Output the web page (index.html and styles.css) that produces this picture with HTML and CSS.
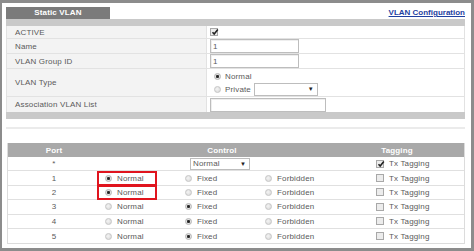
FILE: index.html
```html
<!DOCTYPE html>
<html>
<head>
<meta charset="utf-8">
<link rel="stylesheet" href="styles.css">
</head>
<body>
<div class="frame">
  <div class="top">
    <div class="tab">Static VLAN</div>
    <a class="link" href="#">VLAN Configuration</a>
  </div>
  <div class="band"></div>
  <div class="form">
    <div class="frow h13"><div class="lab">ACTIVE</div><div class="val"><span class="cb on"><svg viewBox="0 0 8 8"><path d="M1.5 4.2 L3.2 6 L6.8 1.6" fill="none" stroke="#222" stroke-width="1.6"/></svg></span></div></div>
    <div class="frow"><div class="lab">Name</div><div class="val"><span class="inp w89">1</span></div></div>
    <div class="frow"><div class="lab">VLAN Group ID</div><div class="val"><span class="inp w89">1</span></div></div>
    <div class="frow h28"><div class="lab">VLAN Type</div>
      <div class="val col">
        <div class="opt"><span class="radio on"></span><span>Normal</span></div>
        <div class="opt"><span class="radio"></span><span>Private</span><span class="sel w64"><span></span><span class="arr">▼</span></span></div>
      </div>
    </div>
    <div class="frow last"><div class="lab">Association VLAN List</div><div class="val"><span class="inp w116"></span></div></div>
  </div>
  <div class="band"></div>
  <div class="sep"></div>
  <div class="ports">
    <div class="phead"><div>Port</div><div class="hctl">Control</div><div class="htag">Tagging</div></div>
    <div class="prow"><div class="pn">*</div><div></div><div><span class="sel w60"><span>Normal</span><span class="arr">▼</span></span></div><div></div><div class="tg"><span class="cb on"><svg viewBox="0 0 8 8"><path d="M1.5 4.2 L3.2 6 L6.8 1.6" fill="none" stroke="#222" stroke-width="1.6"/></svg></span><span>Tx Tagging</span></div></div>
    <div class="prow"><div class="pn">1</div><div class="c1"><span class="opt hl"><span class="radio on"></span><span>Normal</span></span></div><div class="c2"><span class="opt"><span class="radio"></span><span>Fixed</span></span></div><div class="c3"><span class="opt"><span class="radio"></span><span>Forbidden</span></span></div><div class="tg"><span class="cb"></span><span>Tx Tagging</span></div></div>
    <div class="prow"><div class="pn">2</div><div class="c1"><span class="opt hl"><span class="radio on"></span><span>Normal</span></span></div><div class="c2"><span class="opt"><span class="radio"></span><span>Fixed</span></span></div><div class="c3"><span class="opt"><span class="radio"></span><span>Forbidden</span></span></div><div class="tg"><span class="cb"></span><span>Tx Tagging</span></div></div>
    <div class="prow"><div class="pn">3</div><div class="c1"><span class="opt"><span class="radio"></span><span>Normal</span></span></div><div class="c2"><span class="opt"><span class="radio on"></span><span>Fixed</span></span></div><div class="c3"><span class="opt"><span class="radio"></span><span>Forbidden</span></span></div><div class="tg"><span class="cb"></span><span>Tx Tagging</span></div></div>
    <div class="prow"><div class="pn">4</div><div class="c1"><span class="opt"><span class="radio"></span><span>Normal</span></span></div><div class="c2"><span class="opt"><span class="radio on"></span><span>Fixed</span></span></div><div class="c3"><span class="opt"><span class="radio"></span><span>Forbidden</span></span></div><div class="tg"><span class="cb"></span><span>Tx Tagging</span></div></div>
    <div class="prow"><div class="pn">5</div><div class="c1"><span class="opt"><span class="radio"></span><span>Normal</span></span></div><div class="c2"><span class="opt"><span class="radio on"></span><span>Fixed</span></span></div><div class="c3"><span class="opt"><span class="radio"></span><span>Forbidden</span></span></div><div class="tg"><span class="cb"></span><span>Tx Tagging</span></div></div>
  </div>
</div>
</body>
</html>
```
FILE: styles.css
```css
* { box-sizing: border-box; }
html, body { margin: 0; padding: 0; }
body {
  width: 474px; height: 251px;
  font-family: "Liberation Sans", Arial, sans-serif;
  font-size: 8px;
  letter-spacing: 0.15px;
  color: #5a5a5a;
}
.frame {
  width: 474px; height: 251px;
  border-style: solid;
  border-color: #8c8c8c;
  border-width: 3px 3px 3px 2px;
  background: #fff;
  padding: 4px 6px 0 4px;
}
.top {
  display: flex; justify-content: space-between; align-items: flex-end;
  height: 12px;
}
.tab {
  width: 104px; height: 12px;
  background: #7b7b7b; color: #fff;
  font-weight: bold; text-align: center; line-height: 12px;
}
.link {
  color: #1f3f9f; font-weight: bold; text-decoration: underline;
  line-height: 10px; padding-bottom: 1px; margin-right: 0;
  letter-spacing: 0;
}
.band { height: 7px; background: #c9c9c9; }
.form { border-left: 1px solid #e2e2e2; border-right: 1px solid #e2e2e2; }
.frow {
  display: flex; height: 15px;
  border-bottom: 1px solid #e2e2e2;
}
.frow.last { border-bottom: none; }
.frow.h13 { height: 13px; }
.frow.h28 { height: 28px; }
.lab {
  width: 200px; background: #f3f3f3;
  padding-left: 8px; display: flex; align-items: center;
  border-right: 1px solid #e2e2e2;
}
.val { flex: 1; padding-left: 3px; display: flex; align-items: center; }
.val.col { flex-direction: column; align-items: flex-start; justify-content: center; gap: 0; padding-left: 7px; }
.opt { display: inline-flex; align-items: center; gap: 4px; height: 13px; }
.val.col .sel { margin-left: -1px; }
.inp {
  display: inline-flex; align-items: center;
  height: 14px; border: 1px solid #bdbdbd; padding-left: 2px;
  background: #fff; box-shadow: inset 1px 1px 0 #eee;
}
.w89 { width: 89px; }
.w116 { width: 116px; height: 14px; }
.sel {
  display: inline-flex; align-items: center; justify-content: space-between;
  height: 13px; border: 1px solid #bdbdbd; background: #fff;
  padding: 0 3px 0 2px;
}
.w64 { width: 64px; }
.w60 { width: 60px; height: 12px; }
.arr { font-size: 6px; color: #222; }
.radio {
  display: inline-block; width: 7px; height: 7px; border-radius: 50%;
  background: radial-gradient(circle at 40% 40%, #f4f4f4 0, #d6d6d6 100%);
  border: 1px solid #c6c6c6;
}
.radio.on {
  background: radial-gradient(circle, #222 0, #333 1.3px, #e6e6e6 1.8px, #cfcfcf 100%);
  border-color: #b5b5b5;
}
.cb {
  display: inline-block; width: 8px; height: 8px;
  border: 1px solid #a8a8a8; background: #ececec;
  position: relative;
}
.cb svg { display: block; width: 8px; height: 8px; margin: -1px 0 0 -0.5px; }
.sep { height: 2px; background: #ebebeb; margin-top: 8px; }
.ports {
  margin-top: 14px; margin-left: 1px;
  border-left: 1px solid #dcdcdc; border-right: 1px solid #dcdcdc;
  border-bottom: 1px solid #dcdcdc;
}
.phead {
  display: grid; grid-template-columns: 92px 244px 1fr;
  height: 14px; background: #a9a9a9; color: #fff; font-weight: bold;
  align-items: center; text-align: center;
}
.htag { padding-right: 14px; }
.prow {
  display: grid; grid-template-columns: 92px 81px 80px 111px 1fr;
  height: 14.4px; border-bottom: 1px solid #e0e0e0;
  align-items: center;
}
.prow:last-child { border-bottom: none; }
.pn { text-align: center; }
.c1 { padding-left: 5px; }
.c2 { padding-left: 4px; }
.c3 { padding-left: 4px; }
.prow > div:nth-child(3) .sel { margin-left: 9px; }
.tg { display: flex; align-items: center; gap: 5px; padding-left: 4px; }
.c1 .opt, .c2 .opt, .c3 .opt { gap: 5px; }
.hl { position: relative; }
.hl::after {
  content: ""; position: absolute;
  left: -8px; right: -13px; top: -2px; bottom: -1px;
  border: 2px solid #e0141e;
}
.prow:nth-child(3) .hl::after { top: -1px; bottom: -2px; }
```
